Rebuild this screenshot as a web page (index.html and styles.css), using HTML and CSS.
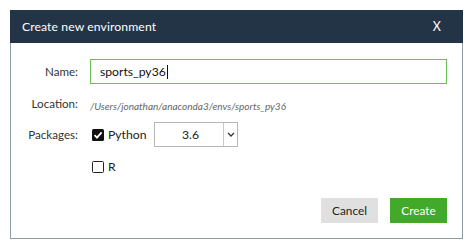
FILE: index.html
```html
<!DOCTYPE html>
<html>
<head>
<meta charset="utf-8">
<link rel="stylesheet" href="styles.css">
</head>
<body>
<div class="dialog">
  <div class="header">
    <span class="title">Create new environment</span>
    <span class="close">X</span>
  </div>
  <div class="content">
    <div class="form">
      <div class="label">Name:</div>
      <div class="control"><div class="input">sports_py36<span class="caret"></span></div></div>
      <div class="label">Location:</div>
      <div class="control"><span class="path">/Users/jonathan/anaconda3/envs/sports_py36</span></div>
      <div class="label">Packages:</div>
      <div class="control pkg">
        <span class="check checked"><svg viewBox="0 0 12 12" width="12" height="12"><rect x="0" y="0" width="12" height="12" rx="1.5" fill="#111"/><path d="M2.6 6.2 L5 8.6 L9.6 3.4" fill="none" stroke="#fff" stroke-width="1.8"/></svg></span>
        <span class="pkgname">Python</span>
        <div class="select"><span class="sval">3.6</span><span class="sarrow"><svg viewBox="0 0 8 5" width="8" height="5"><path d="M1 1 L4 4 L7 1" fill="none" stroke="#333" stroke-width="1.3"/></svg></span></div>
      </div>
      <div class="label"></div>
      <div class="control rrow">
        <span class="check"></span>
        <span class="pkgname">R</span>
      </div>
    </div>
    <div class="buttons">
      <button class="btn cancel">Cancel</button>
      <button class="btn create">Create</button>
    </div>
  </div>
</div>
</body>
</html>
```
FILE: styles.css
```css
html, body { margin: 0; padding: 0; background: #fff; }
body { font-family: "Lato", "Open Sans", sans-serif; color: #222; }
.dialog {
  margin: 10px 0 0 10px;
  width: 451px;
  height: 228px;
  border: 1px solid #8d9ba3;
  border-top: none;
  display: flex;
  flex-direction: column;
}
.header {
  height: 33px;
  background: #243447;
  color: #fff;
  display: flex;
  align-items: center;
  justify-content: space-between;
  padding: 0 22px 0 12px;
  margin: 0 -1px;
  font-size: 12.2px;
  letter-spacing: 0.1px;
}
.close { font-size: 12.5px; }
.content { flex: 1; display: flex; flex-direction: column; padding: 16px 15px 0 0; }
.form {
  display: grid;
  grid-template-columns: 67px 1fr;
  column-gap: 12px;
  grid-template-rows: 25px 38px 25px 39px;
  align-items: center;
}
.label { text-align: right; font-size: 11.6px; color: #333; }
.input {
  height: 23px;
  border: 1px solid #6bbf4e;
  display: flex;
  align-items: center;
  padding-left: 9px;
  font-size: 12.2px;
  color: #111;
}
.caret { display: inline-block; width: 1px; height: 14px; background: #111; margin-left: 1px; }
.path { font-style: italic; font-size: 10px; color: #666; }
.pkg, .rrow { display: flex; align-items: center; }
.check {
  width: 12px; height: 12px; margin-left: 2px;
  box-sizing: border-box; border: 1.5px solid #222; border-radius: 1.5px;
  display: inline-flex;
}
.check.checked { border: none; }
.check svg { display: block; }
.pkgname { margin-left: 4px; font-size: 12.2px; color: #222; }
.select {
  margin-left: 8px;
  width: 82px; height: 23px;
  border: 1px solid #b5b5b5;
  display: flex;
}
.sval { flex: 1; display: flex; align-items: center; justify-content: center; font-size: 12.2px; padding-left: 2px; }
.sarrow { width: 13px; border-left: 1px solid #c8c8c8; display: flex; align-items: center; justify-content: center; }
.buttons { display: flex; justify-content: flex-end; gap: 12px; margin-top: 12px; }
.btn {
  height: 25px; width: 57px; border: none; padding: 0;
  font-family: inherit; font-size: 11.8px;
}
.cancel { background: #e0e0e0; color: #222; }
.create { background: #43a92a; color: #fff; }
```
